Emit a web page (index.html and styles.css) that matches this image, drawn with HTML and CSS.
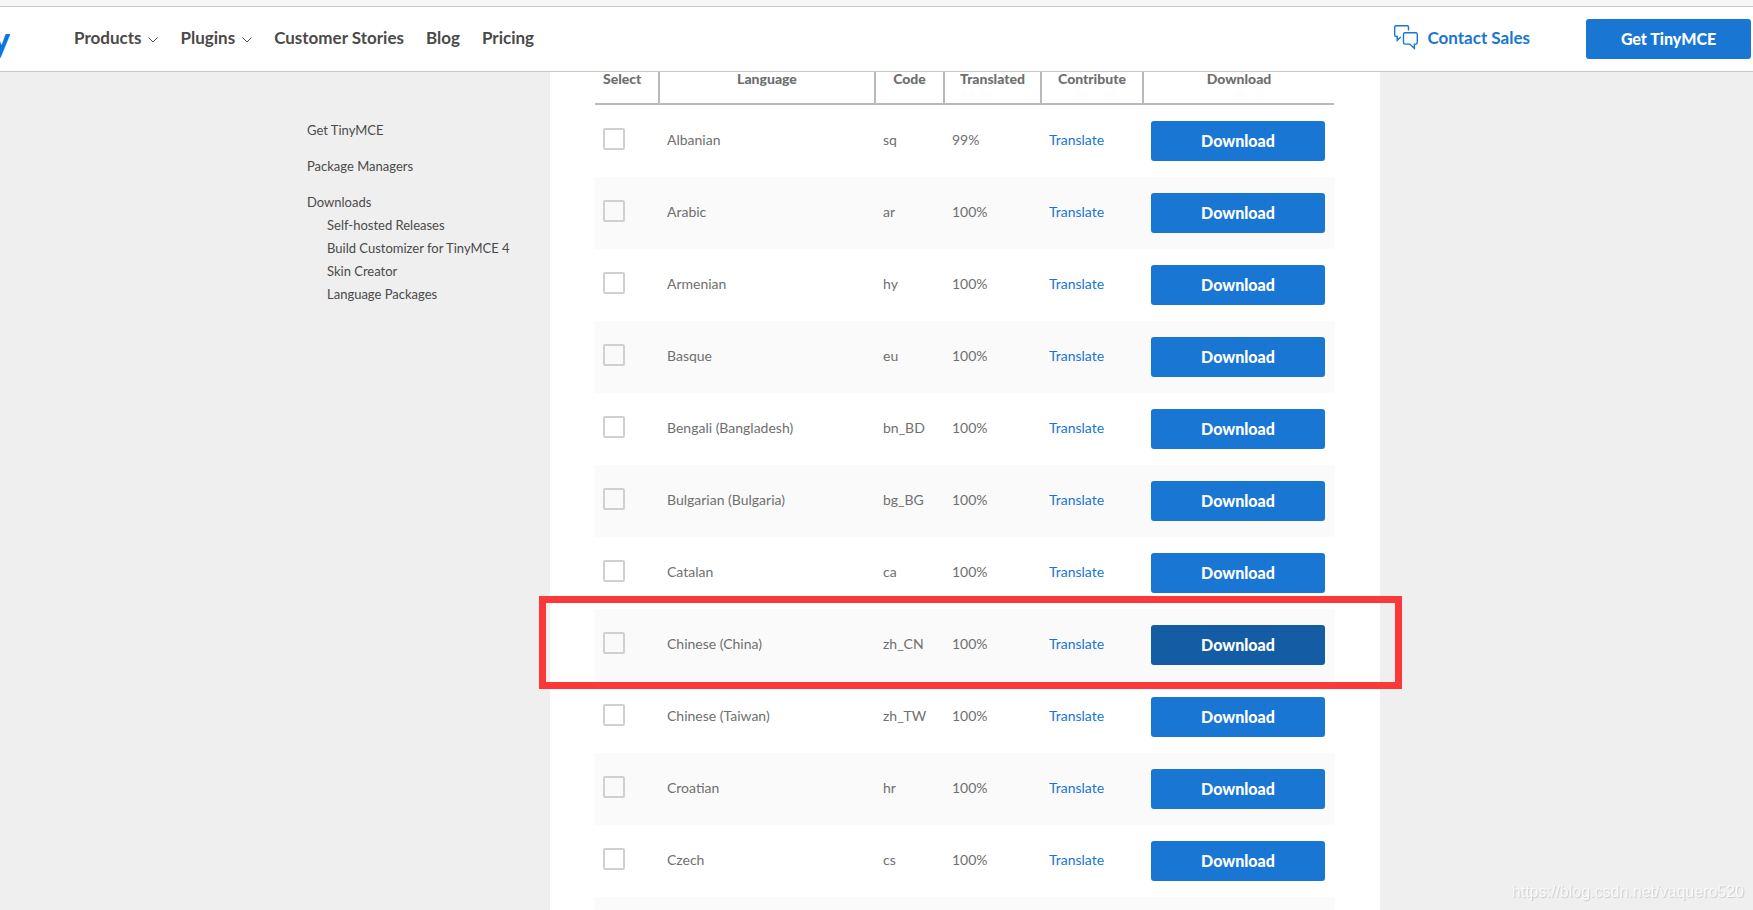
FILE: index.html
```html
<!DOCTYPE html>
<html lang="en">
<head>
    <meta charset="UTF-8">
    <meta name="viewport" content="width=device-width, initial-scale=1.0">
    <title>Language Packages | TinyMCE</title>
    <link rel="stylesheet" href="styles.css">
</head>
<body>
    <header class="header">
        <a class="logo" href="#" aria-label="Tiny">y</a>
        <nav class="nav">
            <a href="#">Products <svg class="chevron" viewBox="0 0 10 6"><path d="M0.5 0.5 L5 5 L9.5 0.5"/></svg></a>
            <a href="#">Plugins <svg class="chevron" viewBox="0 0 10 6"><path d="M0.5 0.5 L5 5 L9.5 0.5"/></svg></a>
            <a href="#">Customer Stories</a>
            <a href="#">Blog</a>
            <a href="#">Pricing</a>
        </nav>
        <a class="contact" href="#">
            <svg class="chat" viewBox="0 0 24 25"><path d="M14.5 5.5V2.2Q14.5 0.7 13 0.7H2.2Q0.7 0.7 0.7 2.2V10Q0.7 11.5 2.2 11.5H3.2V15.3L6.8 12"/><path d="M11 7.7H21.8Q23.3 7.7 23.3 9.2V17.6Q23.3 19.1 21.8 19.1H20.4V23.3L15.8 19.1H11Q9.5 19.1 9.5 17.6V9.2Q9.5 7.7 11 7.7Z"/></svg>
            Contact Sales
        </a>
        <a class="btn btn-get" href="#">Get TinyMCE</a>
    </header>

    <div class="container">
        <aside class="sidebar">
            <ul>
                <li><a href="#">Get TinyMCE</a></li>
                <li><a href="#">Package Managers</a></li>
                <li>
                    <a href="#">Downloads</a>
                    <ul class="submenu">
                        <li><a href="#">Self-hosted Releases</a></li>
                        <li><a href="#">Build Customizer for TinyMCE 4</a></li>
                        <li><a href="#">Skin Creator</a></li>
                        <li><a href="#">Language Packages</a></li>
                    </ul>
                </li>
            </ul>
        </aside>

        <main class="content">
            <table class="languages">
                <colgroup>
                    <col class="col-select">
                    <col class="col-language">
                    <col class="col-code">
                    <col class="col-translated">
                    <col class="col-contribute">
                    <col class="col-download">
                </colgroup>
                <thead>
                    <tr>
                        <th>Select</th>
                        <th>Language</th>
                        <th>Code</th>
                        <th>Translated</th>
                        <th>Contribute</th>
                        <th>Download</th>
                    </tr>
                </thead>
                <tbody>
                    <tr>
                        <td><input type="checkbox" id="sq"></td>
                        <td><label for="sq">Albanian</label></td>
                        <td>sq</td>
                        <td>99%</td>
                        <td><a href="#">Translate</a></td>
                        <td><button class="btn">Download</button></td>
                    </tr>
                    <tr>
                        <td><input type="checkbox" id="ar"></td>
                        <td><label for="ar">Arabic</label></td>
                        <td>ar</td>
                        <td>100%</td>
                        <td><a href="#">Translate</a></td>
                        <td><button class="btn">Download</button></td>
                    </tr>
                    <tr>
                        <td><input type="checkbox" id="hy"></td>
                        <td><label for="hy">Armenian</label></td>
                        <td>hy</td>
                        <td>100%</td>
                        <td><a href="#">Translate</a></td>
                        <td><button class="btn">Download</button></td>
                    </tr>
                    <tr>
                        <td><input type="checkbox" id="eu"></td>
                        <td><label for="eu">Basque</label></td>
                        <td>eu</td>
                        <td>100%</td>
                        <td><a href="#">Translate</a></td>
                        <td><button class="btn">Download</button></td>
                    </tr>
                    <tr>
                        <td><input type="checkbox" id="bn_BD"></td>
                        <td><label for="bn_BD">Bengali (Bangladesh)</label></td>
                        <td>bn_BD</td>
                        <td>100%</td>
                        <td><a href="#">Translate</a></td>
                        <td><button class="btn">Download</button></td>
                    </tr>
                    <tr>
                        <td><input type="checkbox" id="bg_BG"></td>
                        <td><label for="bg_BG">Bulgarian (Bulgaria)</label></td>
                        <td>bg_BG</td>
                        <td>100%</td>
                        <td><a href="#">Translate</a></td>
                        <td><button class="btn">Download</button></td>
                    </tr>
                    <tr>
                        <td><input type="checkbox" id="ca"></td>
                        <td><label for="ca">Catalan</label></td>
                        <td>ca</td>
                        <td>100%</td>
                        <td><a href="#">Translate</a></td>
                        <td><button class="btn">Download</button></td>
                    </tr>
                    <tr class="marked">
                        <td><input type="checkbox" id="zh_CN"></td>
                        <td><label for="zh_CN">Chinese (China)</label></td>
                        <td>zh_CN</td>
                        <td>100%</td>
                        <td><a href="#">Translate</a></td>
                        <td><button class="btn btn-active">Download</button></td>
                    </tr>
                    <tr>
                        <td><input type="checkbox" id="zh_TW"></td>
                        <td><label for="zh_TW">Chinese (Taiwan)</label></td>
                        <td>zh_TW</td>
                        <td>100%</td>
                        <td><a href="#">Translate</a></td>
                        <td><button class="btn">Download</button></td>
                    </tr>
                    <tr>
                        <td><input type="checkbox" id="hr"></td>
                        <td><label for="hr">Croatian</label></td>
                        <td>hr</td>
                        <td>100%</td>
                        <td><a href="#">Translate</a></td>
                        <td><button class="btn">Download</button></td>
                    </tr>
                    <tr>
                        <td><input type="checkbox" id="cs"></td>
                        <td><label for="cs">Czech</label></td>
                        <td>cs</td>
                        <td>100%</td>
                        <td><a href="#">Translate</a></td>
                        <td><button class="btn">Download</button></td>
                    </tr>
                    <tr>
                        <td colspan="6"></td>
                    </tr>
                </tbody>
            </table>
        </main>
    </div>

    <div class="watermark">https://blog.csdn.net/vaquero520</div>
</body>
</html>
```
FILE: styles.css
```css
:root {
    --primary: #1976d2;
    --primary-dark: #145ca4;
    --bg: #efefef;
    --text: #4a4a4a;
    --muted: #6f6f6f;
    --line: #b9b9b9;
}

* {
    margin: 0;
    padding: 0;
    box-sizing: border-box;
}

body {
    background: var(--bg);
    color: var(--text);
    font-family: Lato, sans-serif;
    font-size: 14px;
    height: 100vh;
    overflow: hidden;
    display: flex;
    flex-direction: column;
}

a {
    color: inherit;
    text-decoration: none;
}

ul {
    list-style: none;
}

/* Header */
.header {
    flex: none;
    display: flex;
    align-items: center;
    height: 72px;
    padding-right: 2px;
    background: #fff;
    border-top: 6px solid #f7f7f7;
    border-bottom: 1px solid #c8c8c8;
    box-shadow: inset 0 1px #c8c8c8;
    font-size: 17px;
    font-weight: 700;
}

.logo {
    display: flex;
    justify-content: flex-end;
    width: 10px;
    margin-right: 64px;
    overflow: hidden;
    color: #0c73e0;
    font-size: 34px;
    font-weight: 900;
    line-height: 48px;
}

.nav {
    display: flex;
    gap: 22px;
    margin-right: auto;
    padding-bottom: 2px;
}

.nav a {
    display: flex;
    align-items: center;
    gap: 7px;
}

.chevron {
    width: 10px;
    height: 6px;
    margin-top: 5px;
    fill: none;
    stroke: var(--text);
}

.contact {
    display: flex;
    align-items: center;
    gap: 9px;
    margin-right: 56px;
    padding-bottom: 3px;
    color: var(--primary);
}

.chat {
    width: 24px;
    height: 25px;
    fill: none;
    stroke: var(--primary);
    stroke-width: 1.4;
}

.btn {
    display: block;
    width: 100%;
    height: 40px;
    border: none;
    border-radius: 3px;
    background: var(--primary);
    color: #fff;
    font-family: inherit;
    font-size: 16px;
    font-weight: 900;
    line-height: 40px;
    text-align: center;
    cursor: pointer;
}

.btn:hover,
.btn-active {
    background: var(--primary-dark);
}

.btn-get {
    width: 165px;
}

/* Page */
.container {
    flex: 1;
    display: grid;
    grid-template-columns: 243px 1fr;
    width: 100%;
    max-width: 1139px;
    min-height: 0;
    margin: 0 auto;
    padding-right: 66px;
}

.sidebar {
    padding-top: 47px;
    font-size: 13px;
    line-height: 23px;
}

.sidebar li {
    margin-bottom: 13px;
}

.sidebar .submenu {
    padding-left: 20px;
}

.sidebar .submenu li {
    margin-bottom: 0;
}

.content {
    padding: 0 46px 0 45px;
    background: #fff;
}

.languages {
    width: 100%;
    table-layout: fixed;
    border-collapse: separate;
    border-spacing: 0;
    color: var(--muted);
}

.col-select { width: 65px; }
.col-language { width: 216px; }
.col-code { width: 69px; }
.col-translated { width: 97px; }
.col-contribute { width: 102px; }

.languages th {
    height: 33px;
    padding-bottom: 18px;
    border-right: 2px solid var(--line);
    border-bottom: 2px solid var(--line);
    font-weight: 900;
    line-height: 13px;
}

.languages th:first-child {
    padding-left: 8px;
    text-align: left;
}

.languages th:last-child {
    border-right: none;
}

.languages td {
    height: 72px;
    padding: 0 8px 4px 7px;
}

.languages td:first-child {
    padding: 0 8px;
}

.languages td:last-child {
    padding: 0 9px 0 7px;
}

.languages tbody tr:nth-child(even) {
    background: #fafafa;
}

.languages td a {
    color: var(--primary);
}

.languages input {
    display: block;
    width: 22px;
    height: 22px;
    margin-bottom: 4px;
    appearance: none;
    border: 2px solid #d0d0d0;
    border-radius: 2px;
}

/* Red frame around the picked language */
.marked {
    position: relative;
}

.marked td:last-child::after {
    content: '';
    position: absolute;
    inset: -13px -68px -8px -56px;
    border: 7px solid #fc3838;
    pointer-events: none;
}

.watermark {
    position: fixed;
    right: 9px;
    bottom: 9px;
    color: #f9f9f9;
    font-family: "Liberation Sans", sans-serif;
    font-size: 16px;
    text-shadow: 1px 1px 1px #ccc;
}
```
